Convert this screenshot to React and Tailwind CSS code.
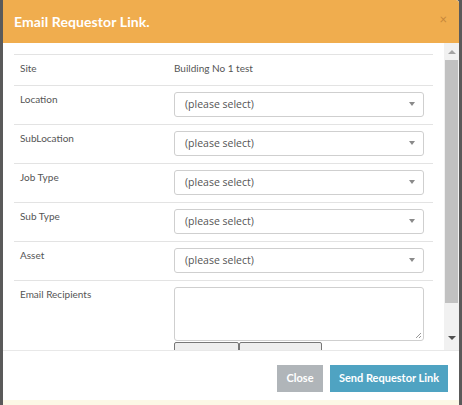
import React from 'react';

const rows = [
  { label: 'Location' },
  { label: 'SubLocation' },
  { label: 'Job Type' },
  { label: 'Sub Type' },
  { label: 'Asset' },
];

function SelectBox() {
  return (
    <div className="relative h-[25px] w-[250px] rounded-[3px] border border-[#cfcfcf] bg-white flex items-center pl-[10px] text-[10.5px] text-[#555] font-['Open_Sans',sans-serif]">
      (please select)
      <span className="absolute right-[8px] top-[9px] w-0 h-0 border-l-[3.5px] border-r-[3.5px] border-t-[4px] border-l-transparent border-r-transparent border-t-[#8a8a8a]" />
    </div>
  );
}

function Row({ label, children, last }) {
  return (
    <div className={`flex border-t border-[#e3e3e3] pl-[6px] pr-[8px] pt-[6px] ${last ? 'pb-0' : 'pb-[7px]'}`}>
      <div className="w-[154px] shrink-0 text-[10px] leading-[14px] text-[#555]">{label}</div>
      <div className="flex-1">{children}</div>
    </div>
  );
}

export default function App() {
  return (
    <div className="w-[462px] h-[405px] bg-[#5a5a5a] pl-[3px] pr-[3px] font-['Lato',sans-serif] overflow-hidden">
      <div className="w-[456px] h-[405px] bg-white flex flex-col rounded-tr-[3px] overflow-hidden">
        {/* Header */}
        <div className="h-[43px] shrink-0 bg-[#f0ad4e] flex items-center justify-between pl-[11px] pr-[12px] rounded-tr-[3px]">
          <h4 className="text-white font-bold text-[14px] tracking-[0.1px]">Email Requestor Link.</h4>
          <span className="text-[#c7873a] text-[13px] leading-none pb-[5px]">×</span>
        </div>

        {/* Body */}
        <div className="h-[308px] shrink-0 flex border-b border-[#e8e8e8]">
          <div className="flex-1 overflow-hidden pl-[11px] pr-[11px] pt-[11px]">
            <div className="flex border-t border-[#e3e3e3] pl-[6px] pr-[8px] pt-[6px] pb-[9px]">
              <div className="w-[154px] shrink-0 text-[10px] leading-[15px] text-[#555]">Site</div>
              <div className="text-[10px] leading-[15px] text-[#555]">Building No 1 test</div>
            </div>
            {rows.map(r => (
              <Row key={r.label} label={r.label}>
                <SelectBox />
              </Row>
            ))}
            <Row label="Email Recipients" last>
              <div className="relative h-[54px] w-[250px] rounded-[3px] border border-[#cfcfcf] bg-white">
                <svg className="absolute right-[1px] bottom-[1px]" width="8" height="8" viewBox="0 0 8 8">
                  <path d="M7 2L2 7M7 5L5 7" stroke="#999" strokeWidth="1" />
                </svg>
              </div>
              <div className="flex mt-[1px]">
                <div className="h-[12px] w-[65px] border border-[#777] bg-[#eee] rounded-t-[2px]" />
                <div className="h-[12px] w-[83px] border border-[#777] bg-[#eee] rounded-t-[2px]" />
              </div>
            </Row>
          </div>
          {/* Scrollbar */}
          <div className="w-[15px] shrink-0 bg-[#f1f1f1] flex flex-col items-center">
            <div className="h-[17px] flex items-center justify-center">
              <span className="w-0 h-0 border-l-[4px] border-r-[4px] border-b-[4px] border-l-transparent border-r-transparent border-b-[#a3a3a3]" />
            </div>
            <div className="w-[13px] h-[243px] bg-[#c1c1c1]" />
            <div className="flex-1 flex items-center justify-center pt-[22px]">
              <span className="w-0 h-0 border-l-[4px] border-r-[4px] border-t-[4px] border-l-transparent border-r-transparent border-t-[#505050]" />
            </div>
          </div>
        </div>

        {/* Footer */}
        <div className="h-[49px] shrink-0 flex justify-end items-start gap-[7px] pt-[14px] pr-[11px]">
          <button className="h-[27px] w-[46px] bg-[#b0b5b9] text-white text-[11px] font-bold">Close</button>
          <button className="h-[27px] w-[118px] bg-[#4fa3c2] text-white text-[11px] font-bold">Send Requestor Link</button>
        </div>
        <div className="flex-1 bg-[#fcf8e6]" />
      </div>
    </div>
  );
}
